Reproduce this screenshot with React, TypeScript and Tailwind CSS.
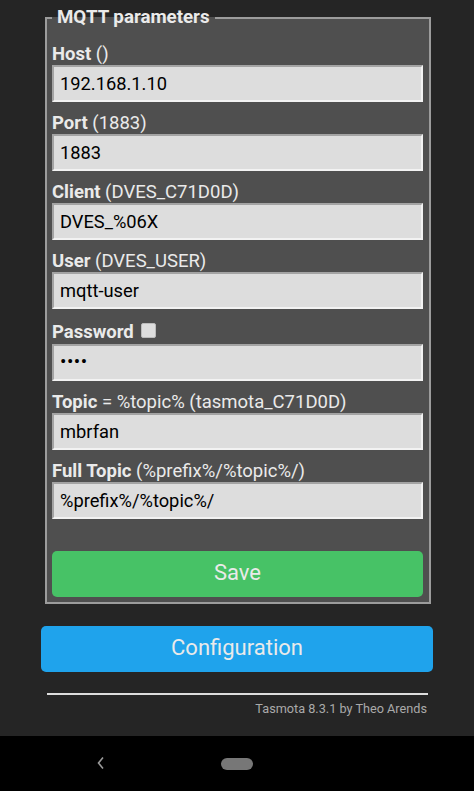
import React from "react";

const fieldRows: { bold: string; rest: string; value: string; pw?: boolean }[] = [
  { bold: "Host", rest: " ()", value: "192.168.1.10" },
  { bold: "Port", rest: " (1883)", value: "1883" },
  { bold: "Client", rest: " (DVES_C71D0D)", value: "DVES_%06X" },
  { bold: "User", rest: " (DVES_USER)", value: "mqtt-user" },
  { bold: "Password", rest: "", value: "••••", pw: true },
  { bold: "Topic", rest: " = %topic% (tasmota_C71D0D)", value: "mbrfan" },
  { bold: "Full Topic", rest: " (%prefix%/%topic%/)", value: "%prefix%/%topic%/" },
];

function Input({ value, pw }: { value: string; pw?: boolean }) {
  return (
    <div
      className={
        "h-[37px] bg-[#dddddd] border-2 border-t-[#a3a3a3] border-l-[#a3a3a3] border-b-[#f2f2f2] border-r-[#f2f2f2] pl-[6px] flex items-center text-black " +
        (pw ? "text-[19px] tracking-[0.5px]" : "text-[18.3px]")
      }
    >
      {value}
    </div>
  );
}

export default function App() {
  return (
    <div
      className="min-h-[791px] bg-[#252525] flex flex-col text-[#eaeaea]"
      style={{ fontFamily: "Roboto, 'Noto Sans', sans-serif" }}
    >
      <div className="flex-1 px-[41px] pt-[7px]">
        <fieldset className="ml-[4px] mr-[2px] border-2 border-[#9c9c9c] bg-[#4f4f4f] pl-[5px] pr-[6px] pb-[5px]">
          <legend className="px-[5px] text-[18.7px] leading-[21px] font-bold text-[#eaeaea]">
            MQTT parameters
          </legend>
          <div className="pt-[5px]">
            {fieldRows.map((r) => (
              <div key={r.bold}>
                <div
                  className={
                    "pt-[11px] text-[18.5px] flex items-center " +
                    (r.pw ? "leading-[24px]" : "leading-[21px]")
                  }
                >
                  <span className="font-bold whitespace-pre">{r.bold}</span>
                  <span className="whitespace-pre">{r.rest}</span>
                  {r.pw && (
                    <span className="ml-[7px] mb-[4px] inline-block w-[15px] h-[15px] bg-[#dddddd] border border-[#bbbbbb] rounded-[2px]" />
                  )}
                </div>
                <Input value={r.value} pw={r.pw} />
              </div>
            ))}
            <div className="pt-[32px]">
              <div className="h-[46px] pb-[3px] rounded-[5px] bg-[#47c266] flex items-center justify-center text-[22px] text-[#eaeaea]">
                Save
              </div>
            </div>
          </div>
        </fieldset>
        <div className="mt-[22px] h-[46px] pb-[3px] rounded-[5px] bg-[#1fa3ec] flex items-center justify-center text-[22px] text-[#eaeaea]">
          Configuration
        </div>
        <div className="mt-[21px] ml-[6px] mr-[5px] h-[2px] bg-[#dddddd]" />
        <div className="mr-[6px] mt-[6px] text-right text-[12.7px] leading-[16px] text-[#aaaaaa]">
          Tasmota 8.3.1 by Theo Arends
        </div>
      </div>
      <div className="h-[55px] bg-black relative flex items-center justify-center">
        <svg
          className="absolute left-[96px] top-[20px]"
          width="10"
          height="14"
          viewBox="0 0 10 14"
          fill="none"
        >
          <path d="M7 1.5 L2.5 7 L7 12.5" stroke="#9a9a9a" strokeWidth="1.6" />
        </svg>
        <div className="w-[32px] h-[12px] rounded-full bg-[#777777]" />
      </div>
    </div>
  );
}
